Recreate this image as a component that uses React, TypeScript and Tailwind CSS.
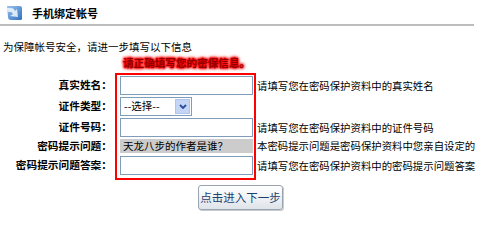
import React from "react";

const font = { fontFamily: '"Noto Sans CJK SC", "Noto Sans", sans-serif' };

function Icon() {
  return (
    <svg width="18" height="16" viewBox="0 0 18 16">
      <defs>
        <linearGradient id="g1" x1="0" y1="0" x2="1" y2="1">
          <stop offset="0" stopColor="#9cc4ee" />
          <stop offset="1" stopColor="#2f6fc0" />
        </linearGradient>
      </defs>
      <path d="M2 1 H15 Q17 1 17 3 V14 Q17 15 15 15 H6 Q3 15 3 12 Z" fill="url(#g1)" />
      <path d="M1 3 L6 3 Q9 3 10 6 L12 4 L13 12 L5 11 L8 9 Q6 6 3 7 Z" fill="#e8f2fc" opacity="0.9" />
    </svg>
  );
}

function Field() {
  return <div className="h-[19px] w-[133px] border border-[#7f9db9] bg-white" />;
}

export default function App() {
  const labels = ["真实姓名：", "证件类型：", "证件号码：", "密码提示问题：", "密码提示问题答案："];
  const heights = ["h-[21px]", "h-[21px]", "h-[21px]", "h-[16px]", "h-[23px]"];
  const hints = [
    "请填写您在密码保护资料中的真实姓名",
    "",
    "请填写您在密码保护资料中的证件号码",
    "本密码提示问题是密码保护资料中您亲自设定的",
    "请填写您在密码保护资料中的密码提示问题答案",
  ];
  return (
    <div className="w-[480px] h-[216px] bg-white text-black overflow-hidden" style={font}>
      <div className="flex items-center h-[24px] pl-[5px] pt-[2px]">
        <Icon />
        <span className="ml-[9px] text-[11px] font-bold leading-none">手机绑定帐号</span>
      </div>
      <div className="w-[474px] h-[2px] bg-[#bdbdbd] mt-[0px]" />
      <div className="pl-[3px] mt-[15px] text-[10.5px] leading-[12px]">为保障帐号安全，请进一步填写以下信息</div>
      <div className="pl-[123px] mt-[4px] h-[12px] text-[10.6px] leading-[12px] font-bold text-[#900000] [text-shadow:0_0_2px_#ff0000,0_0_2px_#ff0000,0_0_3px_#ff0000,0_0_3px_#ff0000,0_0_4px_#ff0000]">
        请正确填写您的密保信息。
      </div>
      <div className="flex mt-[4px]">
        <div className="w-[115px] pt-[2px] flex flex-col">
          {labels.map((l, i) => (
            <div key={i} className={`${heights[i]} flex items-center justify-end pr-[3px] text-[10.7px] font-bold`}>
              {l}
            </div>
          ))}
        </div>
        <div className="w-[141px] h-[107px] border-2 border-[#ff0000] flex flex-col pl-[3px]">
          <div className="h-[21px] flex items-center"><Field /></div>
          <div className="h-[21px] flex items-center">
            <div className="h-[19px] w-[72px] border border-[#7f9db9] bg-white flex items-center">
              <span className="flex-1 pl-[3px] text-[10.5px] leading-none">--选择--</span>
              <div className="w-[15px] h-[15px] mr-[1px] bg-[#c5d5f5] border border-[#b0c4ec] flex items-center justify-center">
                <svg width="8" height="6" viewBox="0 0 8 6">
                  <path d="M1 1 L4 4 L7 1" stroke="#2a4d9a" strokeWidth="1.8" fill="none" />
                </svg>
              </div>
            </div>
          </div>
          <div className="h-[21px] flex items-center"><Field /></div>
          <div className="h-[16px] flex items-center">
            <div className="h-[14px] w-[133px] bg-[#cccccc] flex items-center pl-[3px] text-[10.5px] leading-none">
              天龙八步的作者是谁？
            </div>
          </div>
          <div className="h-[23px] flex items-center"><Field /></div>
        </div>
        <div className="pt-[2px] flex flex-col">
          {hints.map((h, i) => (
            <div key={i} className={`${heights[i]} flex items-center pl-[1px] text-[10.4px] whitespace-nowrap`}>
              {h}
            </div>
          ))}
        </div>
      </div>
      <div className="flex pl-[198px] mt-[5px]">
        <button className="w-[85px] h-[25px] p-0 whitespace-nowrap rounded-[3px] border border-[#9aa4b0] bg-gradient-to-b from-white to-[#dfe4ea] text-[11.5px] text-[#1c3f73] leading-none shadow-[1px_1px_0_#c8ccd2] flex items-center justify-center" style={font}>
          点击进入下一步
        </button>
      </div>
    </div>
  );
}
